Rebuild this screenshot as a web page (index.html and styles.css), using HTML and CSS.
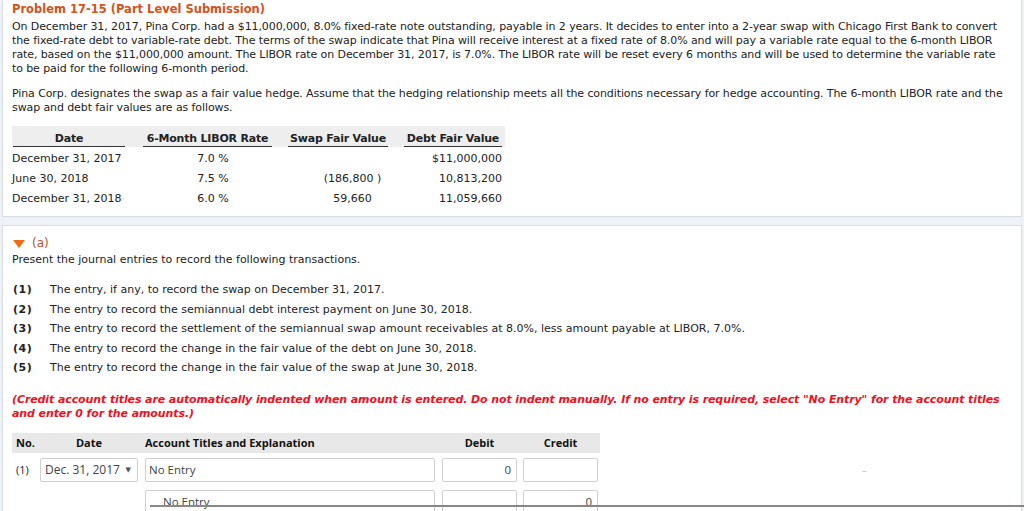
FILE: index.html
```html
<!DOCTYPE html>
<html>
<head>
<meta charset="utf-8">
<link rel="stylesheet" href="styles.css">
</head>
<body>
<div class="page">
  <section class="panel panel-top">
    <h1 class="title">Problem 17-15 (Part Level Submission)</h1>
    <p class="para">On December 31, 2017, Pina Corp. had a $11,000,000, 8.0% fixed-rate note outstanding, payable in 2 years. It decides to enter into a 2-year swap with Chicago First Bank to convert the fixed-rate debt to variable-rate debt. The terms of the swap indicate that Pina will receive interest at a fixed rate of 8.0% and will pay a variable rate equal to the 6-month LIBOR rate, based on the $11,000,000 amount. The LIBOR rate on December 31, 2017, is 7.0%. The LIBOR rate will be reset every 6 months and will be used to determine the variable rate to be paid for the following 6-month period.</p>
    <p class="para">Pina Corp. designates the swap as a fair value hedge. Assume that the hedging relationship meets all the conditions necessary for hedge accounting. The 6-month LIBOR rate and the swap and debt fair values are as follows.</p>
    <table class="data">
      <thead>
        <tr>
          <th class="c-date"><span>Date</span></th>
          <th class="c-rate"><span>6-Month LIBOR Rate</span></th>
          <th class="c-swap"><span>Swap Fair Value</span></th>
          <th class="c-debt"><span>Debt Fair Value</span></th>
        </tr>
      </thead>
      <tbody>
        <tr><td class="c-date">December 31, 2017</td><td class="c-rate">7.0 %</td><td class="c-swap"></td><td class="c-debt">$11,000,000</td></tr>
        <tr><td class="c-date">June 30, 2018</td><td class="c-rate">7.5 %</td><td class="c-swap">(186,800 )</td><td class="c-debt">10,813,200</td></tr>
        <tr><td class="c-date">December 31, 2018</td><td class="c-rate">6.0 %</td><td class="c-swap">59,660</td><td class="c-debt">11,059,660</td></tr>
      </tbody>
    </table>
  </section>
  <section class="panel panel-bottom">
    <div class="part-head"><span class="tri"></span><span class="part-label">(a)</span></div>
    <p class="intro">Present the journal entries to record the following transactions.</p>
    <ol class="tasks">
      <li><b>(1)</b><span>The entry, if any, to record the swap on December 31, 2017.</span></li>
      <li><b>(2)</b><span>The entry to record the semiannual debt interest payment on June 30, 2018.</span></li>
      <li><b>(3)</b><span>The entry to record the settlement of the semiannual swap amount receivables at 8.0%, less amount payable at LIBOR, 7.0%.</span></li>
      <li><b>(4)</b><span>The entry to record the change in the fair value of the debt on June 30, 2018.</span></li>
      <li><b>(5)</b><span>The entry to record the change in the fair value of the swap at June 30, 2018.</span></li>
    </ol>
    <p class="note">(Credit account titles are automatically indented when amount is entered. Do not indent manually. If no entry is required, select "No Entry" for the account titles and enter 0 for the amounts.)</p>
    <div class="journal">
      <div class="j-head">
        <span class="h-no">No.</span>
        <span class="h-date">Date</span>
        <span class="h-acct">Account Titles and Explanation</span>
        <span class="h-debit">Debit</span>
        <span class="h-credit">Credit</span>
      </div>
      <div class="j-row">
        <span class="r-no">(1)</span>
        <span class="box sel">Dec. 31, 2017<span class="caret">▼</span></span>
        <span class="box acct">No Entry</span>
        <span class="box debit">0</span>
        <span class="box credit"></span>
        <span class="dash">–</span>
      </div>
      <div class="j-row">
        <span class="r-no"></span>
        <span class="sel-gap"></span>
        <span class="box acct indent">No Entry</span>
        <span class="box debit"></span>
        <span class="box credit">0</span>
      </div>
    </div>
  </section>
  <div class="scrollbar"></div>
</div>
</body>
</html>
```

FILE: styles.css
```css
html, body {
  margin: 0;
  padding: 0;
  height: 511px;
  overflow: hidden;
  background: #eef2f7;
}
body {
  font-family: "DejaVu Sans", Verdana, sans-serif;
  font-size: 11px;
  color: #222;
}
.page {
  padding: 0 2px 0 2px;
  position: relative;
  height: 511px;
}
.panel {
  background: #fff;
  border: 1px solid #d6dde7;
}
.panel-top {
  border-top: none;
  height: 217px;
  box-sizing: border-box;
  padding: 1px 13px 0 9px;
}
.title {
  margin: 0;
  font-size: 11.5px;
  font-weight: bold;
  color: #d4521a;
  line-height: 16px;
}
.para {
  margin: 3px 0 11px 0;
  line-height: 14px;
  letter-spacing: -0.1px;
}
.data {
  border-collapse: collapse;
  table-layout: fixed;
  margin-top: 8px;
  width: 493px;
  white-space: nowrap;
}
.data thead tr {
  background: #eeeeee;
}
.data th {
  font-weight: bold;
  padding: 4px 0 0 0;
  height: 17px;
  vertical-align: bottom;
  letter-spacing: -0.2px;
}
.data th span {
  display: block;
  border-bottom: 1px solid #333;
  padding-bottom: 1px;
}
.data td {
  height: 20px;
  padding: 0;
  line-height: 20px;
}
.data .c-date { width: 130px; text-align: left; }
.data th.c-date { text-align: center; }
.data th.c-date span { margin: 0 17px 0 1px; }
.data .c-rate { width: 142px; text-align: center; }
.data th.c-rate span { margin: 0 12px 0 1px; }
.data .c-swap { width: 112px; text-align: center; }
.data th.c-swap span { margin: 0 8px 0 4px; }
.data td.c-swap { padding-left: 25px; }
.data .c-debt { width: 109px; text-align: right; }
.data th.c-debt span { margin: 0 3px 0 8px; text-align: center; }
.data td.c-debt { padding-right: 3px; }
.data tbody tr:first-child td { padding-top: 2px; }

.panel-bottom {
  margin-top: 8px;
  border-bottom: none;
  height: 300px;
  padding: 9px 9px 0 9px;
}
.part-head {
  display: flex;
  align-items: center;
  height: 16px;
}
.tri {
  width: 0;
  height: 0;
  border-left: 6px solid transparent;
  border-right: 6px solid transparent;
  border-top: 8px solid #f06a1a;
  margin: 1px 7px 0 1px;
}
.part-label {
  color: #c0501e;
  font-size: 12px;
}
.intro {
  margin: 1px 0 0 0;
  line-height: 16px;
}
.tasks {
  list-style: none;
  margin: 14px 0 0 0;
  padding: 0;
}
.tasks li {
  display: flex;
  height: 19.6px;
  line-height: 16px;
}
.tasks li b {
  width: 37px;
  padding-left: 1px;
  letter-spacing: 0.5px;
}
.note {
  margin: 13px 0 0 0;
  color: #ee1122;
  font-style: italic;
  font-weight: bold;
  line-height: 14px;
  letter-spacing: -0.1px;
}
.journal {
  margin-top: 12px;
  font-family: "Open Sans", "DejaVu Sans", sans-serif;
  font-size: 11px;
  white-space: nowrap;
}
.j-head {
  display: flex;
  align-items: center;
  width: 588px;
  height: 20px;
  background: #e8e8e8;
  font-weight: bold;
  color: #111;
}
.h-no { width: 28px; padding-left: 4px; box-sizing: border-box; }
.h-date { width: 98px; text-align: center; margin-right: 7px; }
.h-acct { width: 297px; }
.h-debit { width: 75px; text-align: center; margin-right: 6px; }
.h-credit { width: 75px; text-align: center; }
.j-row {
  display: flex;
  align-items: center;
  margin-top: 5px;
  height: 24px;
  position: relative;
  font-size: 11.5px;
}
.j-row + .j-row { margin-top: 8px; }
.r-no {
  width: 28px;
  padding-left: 4px;
  box-sizing: border-box;
  color: #222;
  font-size: 11px;
}
.box {
  box-sizing: border-box;
  height: 24px;
  border: 1px solid #cfcfcf;
  border-radius: 2px;
  background: #fff;
  display: flex;
  align-items: center;
  padding: 0 5px;
  color: #444;
  flex: none;
}
.sel {
  width: 98px;
  justify-content: space-between;
  margin-right: 7px;
  padding: 0 6px 0 4px;
  font-size: 12px;
}
.sel-gap { width: 105px; flex: none; }
.caret {
  font-size: 7px;
  color: #555;
}
.acct { width: 290px; padding-left: 3px; margin-right: 7px; }
.acct.indent { padding-left: 17px; }
.debit { width: 75px; justify-content: flex-end; margin-right: 6px; }
.credit { width: 75px; justify-content: flex-end; }
.dash {
  position: absolute;
  left: 850px;
  top: 6px;
  color: #bbb;
  font-size: 9px;
}
.scrollbar {
  position: absolute;
  left: 150px;
  right: 0;
  bottom: 4px;
  height: 2px;
  background: #888;
}
```
